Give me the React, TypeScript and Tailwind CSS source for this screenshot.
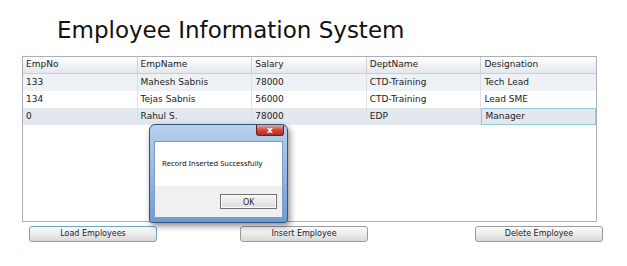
const columns = ["EmpNo", "EmpName", "Salary", "DeptName", "Designation"];

const rows = [
  ["133", "Mahesh Sabnis", "78000", "CTD-Training", "Tech Lead"],
  ["134", "Tejas Sabnis", "56000", "CTD-Training", "Lead SME"],
  ["0", "Rahul S.", "78000", "EDP", "Manager"],
];

const rowBg = ["bg-[#eef2f7]", "bg-white", "bg-[#e3e8ee]"];

function Button({ label, focused, className = "" }: { label: string; focused?: boolean; className?: string }) {
  return (
    <button
      className={
        "h-[16px] w-[128px] rounded-[3px] border bg-gradient-to-b from-[#fbfbfb] via-[#ececec] to-[#d8d8d8] text-[8px] leading-none text-[#222] shadow-[inset_0_1px_0_#fff] " +
        (focused ? "border-[#6fa6c6] " : "border-[#9a9a9a] ") +
        className
      }
    >
      {label}
    </button>
  );
}

function MessageBox() {
  return (
    <div className="absolute left-[149px] top-[124px] flex h-[99px] w-[139px] flex-col rounded-t-[6px] rounded-b-[3px] border border-[#34557f] bg-gradient-to-b from-[#b7d0ee] via-[#93b6e2] to-[#6f9bd3] shadow-[2px_3px_6px_rgba(0,0,0,0.45)]">
      <div className="flex h-[16px] justify-end pr-[3px]">
        <div className="flex h-[11px] w-[28px] items-center justify-center rounded-b-[3px] border border-t-0 border-[#6d1f1a] bg-gradient-to-b from-[#eaa597] via-[#cf4a3e] to-[#b02a20] text-[9px] font-bold leading-none text-white">
          x
        </div>
      </div>
      <div className="mx-[4px] mb-[4px] flex flex-1 flex-col border border-[#7e9cc2] bg-white">
        <div className="flex h-[44px] items-center pl-[7px] text-[7.5px] text-[#111] [font-family:'Noto_Sans',sans-serif]">
          Record Inserted Successfully
        </div>
        <div className="flex flex-1 justify-end bg-[#f0f0f0] pr-[5px] pt-[8px]">
          <div className="flex h-[15px] w-[57px] items-center justify-center border border-[#707070] bg-gradient-to-b from-[#f6f6f6] to-[#dedede] text-[8px] leading-none text-[#111] shadow-[inset_0_0_0_1px_#fcfcfc] [font-family:'Noto_Sans',sans-serif]">
            OK
          </div>
        </div>
      </div>
    </div>
  );
}

export default function App() {
  return (
    <div className="relative h-[266px] w-[627px] bg-white [font-family:'DejaVu_Sans',Verdana,sans-serif]">
      <h1 className="pl-[57px] pt-[17px] text-[23px] leading-[26px] text-[#111]">
        Employee Information System
      </h1>

      <div className="ml-[22px] mt-[13px] h-[166px] w-[575px] border border-[#a7b0bb] bg-white">
        <div className="grid h-[17px] grid-cols-5 border-b border-[#c9ced5] bg-gradient-to-b from-white to-[#e4e7eb]">
          {columns.map((c) => (
            <div
              key={c}
              className="flex items-center border-r border-[#ccd1d7] pl-[3px] text-[9px] text-[#222] last:border-r-0"
            >
              {c}
            </div>
          ))}
        </div>
        {rows.map((r, i) => (
          <div key={i} className={"grid h-[17px] grid-cols-5 " + rowBg[i]}>
            {r.map((cell, j) => (
              <div
                key={j}
                className={
                  "flex items-center pl-[3px] text-[9px] text-[#222] " +
                  (i === 2 && j === 4
                    ? "border border-[#94cbd8]"
                    : "border-r border-[#dde1e6] last:border-r-0")
                }
              >
                {cell}
              </div>
            ))}
          </div>
        ))}
      </div>

      <div className="mt-[4px] flex items-start pl-[29px]">
        <Button label="Load Employees" focused />
        <Button label="Insert Employee" className="ml-[83px]" />
        <Button label="Delete Employee" className="ml-[107px]" />
      </div>

      <MessageBox />
    </div>
  );
}
